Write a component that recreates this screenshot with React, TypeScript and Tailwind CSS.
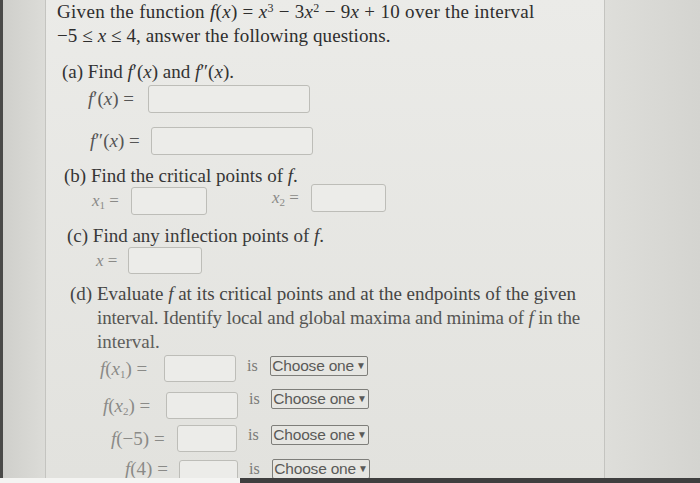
import type { ReactNode } from 'react'

const serif = { fontFamily: '"Liberation Serif", "DejaVu Serif", serif' }

function V({ children }: { children: ReactNode }) {
  return <i className="italic">{children}</i>
}

function Box({ className }: { className: string }) {
  return <div className={`shrink-0 rounded-[3px] border border-[#bdbdb8] bg-[#ecece9] ${className}`} />
}

function Choose({ className }: { className: string }) {
  return (
    <div
      className={`flex h-[20px] w-[98px] shrink-0 items-center justify-center gap-[2px] rounded-[2px] border border-[#7e7e7a] bg-[#e6e6e2] text-[15.5px] leading-none tracking-[-0.2px] text-[#5a5a58] ${className}`}
      style={{ fontFamily: '"Liberation Sans", Arial, sans-serif' }}
    >
      Choose one<span className="text-[10px]">▼</span>
    </div>
  )
}

function EvalRow({
  className,
  label,
  labelW,
  labelMt = 'mt-[4px]',
  box,
  isW,
  selectMt,
}: {
  className: string
  label: ReactNode
  labelW: string
  labelMt?: string
  box: string
  isW: string
  selectMt: string
}) {
  return (
    <div className={`flex items-start leading-[20px] ${className}`}>
      <span className={`${labelW} ${labelMt} shrink-0 text-[#8a8a87]`}>{label}</span>
      <Box className={`${box} h-[27px]`} />
      <span className={`${isW} ${selectMt} shrink-0 pl-[11px] text-[16px] text-[#7a7a77]`}>is</span>
      <Choose className={selectMt} />
    </div>
  )
}

export default function App() {
  return (
    <div className="flex h-[483px] w-[700px] flex-col overflow-hidden bg-[#d8d8d4]">
      <div className="flex h-[478px] overflow-hidden">
        <div className="w-[3px] shrink-0 bg-[#4a4a48]" />
        <div className="w-[42px] shrink-0 bg-gradient-to-r from-[#cfcfcb] to-[#dcdcd8]" />
        <main
          className="w-[560px] shrink-0 border-x border-[#c4c4c0] bg-gradient-to-b from-[#ebebe8] to-[#e2e2de] pl-[11px] text-[19px] leading-[24px] text-[#2e2e2e]"
          style={serif}
        >
          <p className="tracking-[0.3px]">
            Given the function <V>f</V>(<V>x</V>) = <V>x</V>
            <sup className="text-[12px]">3</sup> − 3<V>x</V>
            <sup className="text-[12px]">2</sup> − 9<V>x</V> + 10 over the interval
          </p>
          <p className="tracking-[0.1px]">
            −5 ≤ <V>x</V> ≤ 4, answer the following questions.
          </p>

          <p className="mt-[12px] pl-[5px] text-[#333]">
            (a) Find <V>f</V>′(<V>x</V>) and <V>f</V>″(<V>x</V>).
          </p>
          <div className="mt-[1px] flex items-center pl-[31px]">
            <span className="w-[60px] shrink-0 text-[#555]">
              <V>f</V>′(<V>x</V>) =
            </span>
            <Box className="h-[28px] w-[162px]" />
          </div>
          <div className="mt-[14px] flex items-center pl-[33px]">
            <span className="w-[61px] shrink-0 text-[#555]">
              <V>f</V>″(<V>x</V>) =
            </span>
            <Box className="h-[28px] w-[162px]" />
          </div>

          <p className="mt-[9px] pl-[7px] text-[#353535]">
            (b) Find the critical points of <V>f</V>.
          </p>
          <div className="-mt-[4px] flex items-start pl-[35px]">
            <span className="mt-[5px] w-[39px] shrink-0 text-[17px] text-[#8a8a87]">
              <V>x</V>
              <sub className="text-[11px]">1</sub> =
            </span>
            <Box className="mt-[3px] h-[28px] w-[76px]" />
            <span className="ml-[65px] mt-[2px] w-[39px] shrink-0 text-[17px] text-[#8a8a87]">
              <V>x</V>
              <sub className="text-[11px]">2</sub> =
            </span>
            <Box className="h-[28px] w-[75px]" />
          </div>

          <p className="mt-[9px] pl-[10px] text-[#3a3a3a]">
            (c) Find any inflection points of <V>f</V>.
          </p>
          <div className="-mt-[1px] flex items-center pl-[39px]">
            <span className="w-[32px] shrink-0 text-[17px] text-[#8a8a87]">
              <V>x</V> =
            </span>
            <Box className="h-[27px] w-[74px]" />
          </div>

          <div className="mt-[8px] pl-[13px] text-[#454544]">
            <p>
              (d) Evaluate <V>f</V> at its critical points and at the endpoints of the given
            </p>
            <p className="pl-[27px] tracking-[-0.15px] text-[#555553]">
              interval. Identify local and global maxima and minima of <V>f</V> in the
            </p>
            <p className="pl-[27px] text-[#5e5e5c]">interval.</p>
          </div>

          <EvalRow
            className="mt-[1px] pl-[43px]"
            labelW="w-[64px]"
            box="w-[72px]"
            isW="w-[34px]"
            selectMt="mt-[1px]"
            label={
              <>
                <V>f</V>(<V>x</V>
                <sub className="text-[11px]">1</sub>) =
              </>
            }
          />
          <EvalRow
            className="mt-[10px] pl-[46px]"
            labelW="w-[63px]"
            box="w-[72px]"
            isW="w-[33px]"
            selectMt="-mt-[3px]"
            label={
              <>
                <V>f</V>(<V>x</V>
                <sub className="text-[11px]">2</sub>) =
              </>
            }
          />
          <EvalRow
            className="mt-[6px] pl-[54px]"
            labelW="w-[66px]"
            box="w-[60px]"
            isW="w-[34px]"
            selectMt="mt-[0px]"
            label={
              <>
                <V>f</V>(−5) =
              </>
            }
          />
          <EvalRow
            className="mt-[8px] pl-[68px]"
            labelW="w-[54px]"
            labelMt="mt-[1px] leading-[16px]"
            box="w-[59px]"
            isW="w-[34px]"
            selectMt="-mt-[1px]"
            label={
              <>
                <V>f</V>(4) =
              </>
            }
          />
        </main>
        <div className="flex-1 bg-gradient-to-r from-[#dededa] to-[#d4d4d0]" />
      </div>
      <div className="flex h-[5px]">
        <div className="w-[240px] bg-[#f4f4f2]" />
        <div className="flex-1 bg-[#3f3f3f]" />
      </div>
    </div>
  )
}
